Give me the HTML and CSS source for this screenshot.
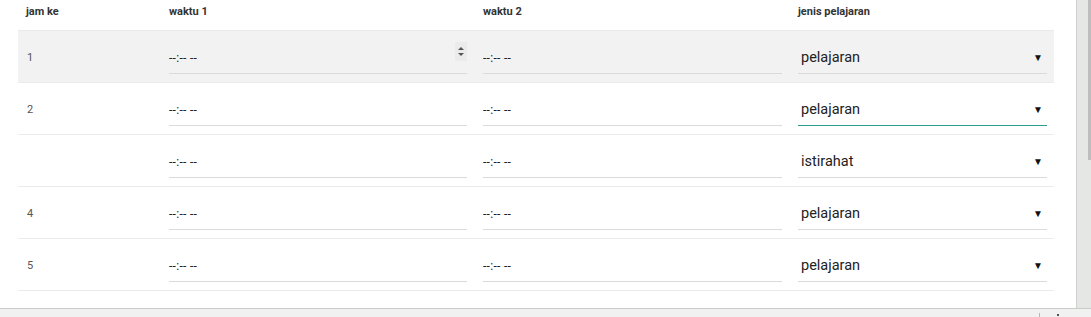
FILE: index.html
```html
<!DOCTYPE html>
<html>
<head>
<meta charset="utf-8">
<link rel="stylesheet" href="styles.css">
</head>
<body>
<div class="frame">
  <div class="top">
    <div class="main">
      <table class="jadwal">
        <thead>
          <tr>
            <th class="c1">jam ke</th>
            <th class="c2">waktu 1</th>
            <th class="c3">waktu 2</th>
            <th class="c4">jenis pelajaran</th>
          </tr>
        </thead>
        <tbody>
          <tr class="hover">
            <td class="num">1</td>
            <td><div class="time">--:-- --<span class="spin"><span class="up"></span><span class="down"></span></span></div></td>
            <td><div class="time">--:-- --</div></td>
            <td><div class="select"><span>pelajaran</span><span class="caret">▼</span></div></td>
          </tr>
          <tr>
            <td class="num">2</td>
            <td><div class="time">--:-- --</div></td>
            <td><div class="time">--:-- --</div></td>
            <td><div class="select focus"><span>pelajaran</span><span class="caret">▼</span></div></td>
          </tr>
          <tr>
            <td class="num"></td>
            <td><div class="time">--:-- --</div></td>
            <td><div class="time">--:-- --</div></td>
            <td><div class="select"><span>istirahat</span><span class="caret">▼</span></div></td>
          </tr>
          <tr>
            <td class="num">4</td>
            <td><div class="time">--:-- --</div></td>
            <td><div class="time">--:-- --</div></td>
            <td><div class="select"><span>pelajaran</span><span class="caret">▼</span></div></td>
          </tr>
          <tr>
            <td class="num">5</td>
            <td><div class="time">--:-- --</div></td>
            <td><div class="time">--:-- --</div></td>
            <td><div class="select"><span>pelajaran</span><span class="caret">▼</span></div></td>
          </tr>
        </tbody>
      </table>
    </div>
    <div class="side"><div class="thumb"></div></div>
  </div>
  <div class="bottom"><span class="divider"></span><span class="dot"></span></div>
</div>
</body>
</html>
```
FILE: styles.css
```css
* { box-sizing: border-box; }
html, body { margin: 0; padding: 0; background: #fff; }
body { font-family: Roboto, "Noto Sans", Arial, sans-serif; color: #333; overflow: hidden; }
.frame { width: 1091px; height: 317px; display: flex; flex-direction: column; }
.top { flex: 1; display: flex; min-height: 0; }
.main { flex: 1; padding: 0 22px 0 18px; background: #fff; }
.side {
  width: 15px;
  border-left: 1px solid #cfcfcf;
  background: #e5e7e5;
  display: flex;
  justify-content: flex-end;
}
.thumb { width: 3px; height: 160px; background: #bdbdbd; }
.bottom {
  height: 9px;
  border-top: 1px solid #cacaca;
  background: #f1f1f1;
  display: flex;
  align-items: flex-end;
  padding-left: 1039px;
  gap: 17px;
}
.divider { width: 1px; height: 4px; background: #b8b8b8; }
.dot { width: 2px; height: 2px; background: #555; margin-bottom: 1px; }

.jadwal { width: 100%; border-collapse: collapse; table-layout: fixed; }
.c1 { width: 143px; }
.c2 { width: 314px; }
.c3 { width: 315px; }
.jadwal th {
  text-align: left;
  font-size: 11px;
  font-weight: bold;
  color: #333;
  padding: 5px 8px 0;
  line-height: 14px;
  height: 30px;
  vertical-align: top;
  border-bottom: 1px solid #e9e9e9;
}
.jadwal td {
  height: 52px;
  padding: 10px 8px 0;
  vertical-align: top;
  border-bottom: 1px solid #ececec;
}
.jadwal tr.hover td { background: #f2f2f2; }
.num { font-size: 11px; color: #555; line-height: 34px; padding-left: 9px !important; }
.time {
  position: relative;
  height: 33px;
  line-height: 34px;
  font-size: 12px;
  letter-spacing: 0.3px;
  color: #222;
  border-bottom: 1px solid #dadada;
}
.spin {
  position: absolute;
  right: 0;
  top: 1px;
  width: 12px;
  height: 19px;
  background: #ebebeb;
  display: flex;
  flex-direction: column;
  align-items: center;
  justify-content: center;
  gap: 3px;
}
.up { width: 0; height: 0; border-left: 3px solid transparent; border-right: 3px solid transparent; border-bottom: 3px solid #555; }
.down { width: 0; height: 0; border-left: 3px solid transparent; border-right: 3px solid transparent; border-top: 3px solid #555; }
.select {
  height: 33px;
  margin-right: -1px;
  display: flex;
  justify-content: space-between;
  align-items: center;
  padding: 1px 4px 0 3px;
  font-size: 14.5px;
  color: #222;
  border-bottom: 1px solid #dadada;
}
.select.focus { border-bottom-color: #2a9d8f; }
.caret { font-size: 10px; color: #111; }
```
